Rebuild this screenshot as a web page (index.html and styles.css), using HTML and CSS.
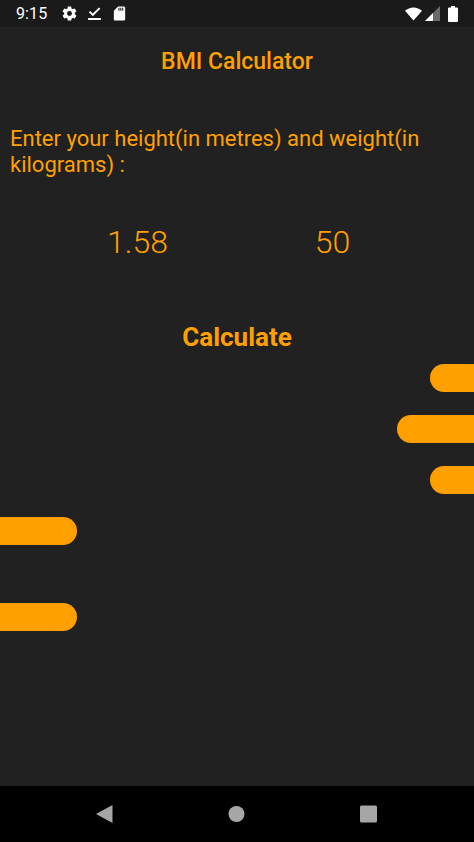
FILE: index.html
```html
<!DOCTYPE html>
<html lang="en">
<head>
<meta charset="utf-8">
<title>BMI Calculator</title>
<link rel="stylesheet" href="styles.css">
</head>
<body>
<div class="screen">
  <header class="status">
    <span class="time">9:15</span>
    <svg class="ic" viewBox="0 0 24 24"><path fill="#fff" d="M19.4 13c.04-.3.1-.66.1-1s-.06-.7-.1-1l2.1-1.65c.2-.15.25-.42.13-.64l-2-3.46c-.12-.22-.4-.3-.6-.22l-2.5 1c-.52-.4-1.08-.73-1.7-.98l-.37-2.65A.5.5 0 0 0 14 2h-4a.5.5 0 0 0-.5.42l-.37 2.65c-.62.25-1.18.59-1.7.98l-2.5-1c-.22-.08-.48 0-.6.22l-2 3.46c-.13.22-.07.49.12.64L4.57 11c-.04.32-.07.66-.07 1s.03.68.07 1l-2.11 1.65c-.19.15-.25.42-.12.64l2 3.46c.12.22.38.3.6.22l2.49-1c.52.4 1.08.73 1.7.98l.37 2.65c.04.24.25.42.5.42h4c.25 0 .46-.18.5-.42l.37-2.65c.62-.25 1.18-.59 1.7-.98l2.49 1c.23.08.49 0 .61-.22l2-3.46c.12-.22.07-.49-.12-.64L19.4 13zM12 15.500a3.500 3.500 0 1 1 0-7 3.500 3.500 0 0 1 0 7z"/></svg>
    <svg class="ic" viewBox="0 0 24 24"><path fill="#fff" d="M3 18.500h18v2.600H3zM9.600 15.800 4 10.300l1.900-1.900 3.700 3.700 8.700-8.700 1.900 1.900z"/></svg>
    <svg class="ic" viewBox="0 0 24 24"><path fill="#fff" d="M18 2h-8L4 8v12c0 1.100.9 2 2 2h12c1.100 0 2-.9 2-2V4c0-1.100-.9-2-2-2zm-6 6h-1.500V4H12v4zm2.600 0h-1.500V4h1.500v4zm2.700 0h-1.500V4h1.500v4z"/></svg>
    <span class="spacer"></span>
    <svg class="wifi" viewBox="0 0 18 14"><path fill="#fff" d="M0 3.600C2.500 1.300 5.600 0 9 0s6.500 1.300 9 3.600L9 14z"/></svg>
    <svg class="signal" viewBox="0 0 15 15"><path fill="#fff" fill-opacity=".35" d="M15 0v15H0z"/><path fill="#fff" d="M8 7v8H0z"/></svg>
    <svg class="battery" viewBox="0 0 10 16"><path fill="#fff" d="M3 0h4v1.500h2a1 1 0 0 1 1 1V15a1 1 0 0 1-1 1H1a1 1 0 0 1-1-1V2.500a1 1 0 0 1 1-1h2z"/></svg>
  </header>

  <main class="app">
    <h1 class="title">BMI Calculator</h1>
    <p class="prompt">Enter your height(in metres) and weight(in kilograms) :</p>
    <div class="inputs">
      <span class="value">1.58</span>
      <span class="value">50</span>
    </div>
    <div class="calc">Calculate</div>
    <div class="bars">
      <div class="bar right short"></div>
      <div class="bar right long"></div>
      <div class="bar right short"></div>
      <div class="bar left"></div>
      <div class="bar left gap"></div>
    </div>
  </main>

  <footer class="nav">
    <svg class="nav-ic" viewBox="0 0 17 18"><path fill="#a6a6a6" d="M16.500 0v18L0 9z"/></svg>
    <svg class="nav-ic" viewBox="0 0 17 17"><circle fill="#a6a6a6" cx="8.500" cy="8.500" r="8"/></svg>
    <svg class="nav-ic" viewBox="0 0 17 17"><rect fill="#a6a6a6" width="17" height="17" rx="1.500"/></svg>
  </footer>
</div>
</body>
</html>
```
FILE: styles.css
```css
* { box-sizing: border-box; margin: 0; padding: 0; }
html, body { width: 474px; height: 842px; overflow: hidden; background: #212121; }
body { font-family: Roboto, "Noto Sans", sans-serif; color: #ffa000; }
.screen { width: 474px; height: 842px; display: flex; flex-direction: column; }
.status { height: 27px; background: #1a1a1a; display: flex; align-items: center; padding: 0 16px 0 16px; color: #fff; flex: none; }
.time { font-size: 16px; width: 45px; letter-spacing: .1px; }
.ic { width: 17px; height: 17px; margin-right: 8px; flex: none; }
.spacer { flex: 1; }
.wifi { width: 17px; height: 14px; margin-right: 3px; }
.signal { width: 15px; height: 15px; margin-right: 8px; }
.battery { width: 10px; height: 16px; }
.app { flex: 1; min-height: 0; display: flex; flex-direction: column; }
.title { font-size: 23px; font-weight: 500; text-align: center; line-height: 26px; margin-top: 22px; }
.prompt { font-size: 22px; line-height: 26px; padding: 0 10px; margin-top: 51px; }
.inputs { display: flex; margin-top: 45px; }
.value { font-size: 32px; font-weight: 300; line-height: 38px; text-align: center; }
.value:first-child { width: 275px; }
.value:last-child { width: 115px; }
.calc { font-size: 26px; font-weight: 700; text-align: center; line-height: 30px; margin-top: 61px; }
.bars { display: flex; flex-direction: column; gap: 23.500px; margin-top: 12px; }
.bar { height: 27.500px; background: #ffa000; }
.right { align-self: flex-end; border-radius: 14px 0 0 14px; }
.short { width: 44px; }
.long { width: 77px; }
.left { width: 77px; border-radius: 0 14px 14px 0; }
.gap { margin-top: 35px; }
.nav { height: 56px; background: #000; display: flex; align-items: center; flex: none; padding-left: 96px; gap: 115px; }
.nav-ic { width: 17px; height: 18px; flex: none; }
```
